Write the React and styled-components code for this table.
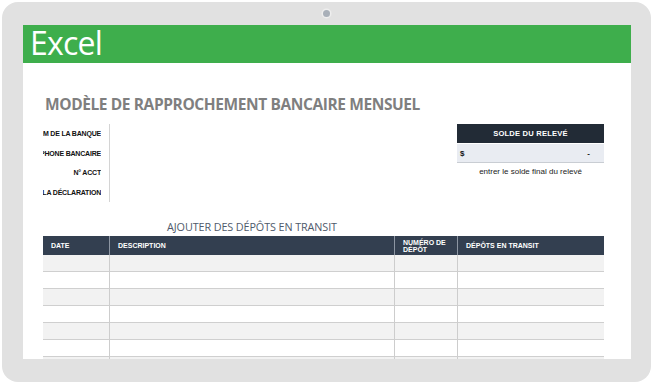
import React from "react";
import styled, { createGlobalStyle } from "styled-components";

const Global = createGlobalStyle`
  html, body { margin: 0; padding: 0; background: #ffffff; }
  body { font-family: "Open Sans", "Liberation Sans", sans-serif; }
`;

const Frame = styled.div`
  margin: 2px 0 0 2px;
  width: 649px;
  height: 380px;
  box-sizing: border-box;
  background: #e1e1e1;
  border-radius: 16px;
  padding: 0 20px 0 21px;
  display: flex;
  flex-direction: column;
`;

const CameraRow = styled.div`
  height: 23px;
  flex-shrink: 0;
  display: flex;
  align-items: center;
  justify-content: center;
  padding-right: 2px;
`;

const Camera = styled.div`
  width: 7px;
  height: 7px;
  border-radius: 50%;
  background: #a9b0b9;
  box-shadow: 0 0 0 1.5px #eeeeee;
`;

const Screen = styled.div`
  width: 608px;
  height: 334px;
  flex-shrink: 0;
  background: #ffffff;
  overflow: hidden;
  display: flex;
  flex-direction: column;
`;

const AppBar = styled.div`
  height: 38px;
  flex-shrink: 0;
  background: #3eae4c;
  display: flex;
  align-items: center;
  padding-left: 7px;
`;

const AppName = styled.span`
  color: #ffffff;
  font-family: "Open Sans", sans-serif;
  font-weight: 400;
  font-size: 32px;
  letter-spacing: -0.8px;
  line-height: 1;
  padding-bottom: 2px;
`;

const Content = styled.div`
  flex-shrink: 0;
  padding: 0 27px 0 20px;
  display: flex;
  flex-direction: column;
`;

const Title = styled.h1`
  margin: 31px 0 10px 2px;
  font-family: "Open Sans", sans-serif;
  font-weight: 700;
  font-size: 15.5px;
  line-height: 20px;
  color: #7f7f7f;
  letter-spacing: -0.4px;
`;

const InfoArea = styled.div`
  display: flex;
  justify-content: space-between;
  height: 78px;
`;

const Labels = styled.div`
  display: flex;
  flex-direction: column;
  width: 66px;
  border-right: 1px solid #d4d4d4;
`;

const Label = styled.div`
  height: 19.5px;
  line-height: 19.5px;
  width: 58px;
  overflow: hidden;
  white-space: nowrap;
  direction: rtl;
  text-align: right;
  font-family: "Liberation Sans", sans-serif;
  font-weight: 700;
  font-size: 7px;
  color: #111111;
  letter-spacing: -0.2px;
`;

const BalanceBox = styled.div`
  width: 147px;
  display: flex;
  flex-direction: column;
`;

const BalanceHead = styled.div`
  height: 19px;
  background: #222b36;
  color: #ffffff;
  display: flex;
  align-items: center;
  justify-content: center;
  font-family: "Liberation Sans", sans-serif;
  font-weight: 700;
  font-size: 7.6px;
  letter-spacing: 0.2px;
`;

const BalanceValue = styled.div`
  height: 19px;
  margin-top: 1px;
  background: #e9ecf2;
  border-bottom: 1px solid #c9cdd3;
  box-sizing: border-box;
  display: flex;
  align-items: center;
  justify-content: space-between;
  padding: 0 14px 0 3px;
  font-family: "Liberation Sans", sans-serif;
  font-weight: 700;
  font-size: 8px;
  color: #111111;
`;

const Caption = styled.div`
  margin-top: 4px;
  text-align: center;
  font-family: "Liberation Sans", sans-serif;
  font-size: 8px;
  color: #222222;
`;

const Cols = `66px 285px 63px 147px`;

const SectionRow = styled.div`
  display: grid;
  grid-template-columns: ${Cols};
  margin-top: 16px;
  height: 17px;
  align-items: center;
`;

const SectionTitle = styled.div`
  grid-column: 2;
  text-align: center;
  font-family: "Open Sans", sans-serif;
  font-weight: 400;
  font-size: 10.8px;
  color: #4f5a6b;
  letter-spacing: -0.1px;
  padding-left: 1px;
`;

const Table = styled.div`
  display: grid;
  grid-template-columns: ${Cols};
  margin-top: 1px;
`;

const HeadCell = styled.div`
  height: 19px;
  box-sizing: border-box;
  background: #333f50;
  border-left: ${(p) => (p.$first ? "none" : "1.5px solid #8d96a3")};
  color: #ffffff;
  font-family: "Liberation Sans", sans-serif;
  font-weight: 700;
  font-size: 7px;
  line-height: 7px;
  padding: 0 8px;
  display: flex;
  align-items: center;
  white-space: pre-line;
`;

const Cell = styled.div`
  height: 17px;
  box-sizing: border-box;
  background: ${(p) => (p.$alt ? "#f2f2f2" : "#ffffff")};
  border-bottom: 1.5px solid #cfcfcf;
  border-left: ${(p) => (p.$first ? "none" : "1.5px solid #cdcdcd")};
`;

const headers = ["DATE", "DESCRIPTION", "NUMÉRO DE\nDÉPÔT", "DÉPÔTS EN TRANSIT"];
const labels = ["NOM DE LA BANQUE", "TÉLÉPHONE BANCAIRE", "N° ACCT", "DATE DE LA DÉCLARATION"];

export default function App() {
  const rows = Array.from({ length: 7 }, (_, i) => i);
  return (
    <>
      <Global />
      <Frame>
        <CameraRow>
          <Camera />
        </CameraRow>
        <Screen>
          <AppBar>
            <AppName>Excel</AppName>
          </AppBar>
          <Content>
            <Title>MODÈLE DE RAPPROCHEMENT BANCAIRE MENSUEL</Title>
            <InfoArea>
              <Labels>
                {labels.map((l) => (
                  <Label key={l}>
                    <bdi dir="ltr">{l}</bdi>
                  </Label>
                ))}
              </Labels>
              <BalanceBox>
                <BalanceHead>SOLDE DU RELEVÉ</BalanceHead>
                <BalanceValue>
                  <span>$</span>
                  <span>-</span>
                </BalanceValue>
                <Caption>entrer le solde final du relevé</Caption>
              </BalanceBox>
            </InfoArea>
            <SectionRow>
              <SectionTitle>AJOUTER DES DÉPÔTS EN TRANSIT</SectionTitle>
            </SectionRow>
            <Table>
              {headers.map((h, i) => (
                <HeadCell key={h} $first={i === 0}>
                  {h}
                </HeadCell>
              ))}
              {rows.map((r) =>
                headers.map((h, i) => (
                  <Cell key={`${r}-${i}`} $alt={r % 2 === 0} $first={i === 0} />
                ))
              )}
            </Table>
          </Content>
        </Screen>
      </Frame>
    </>
  );
}
